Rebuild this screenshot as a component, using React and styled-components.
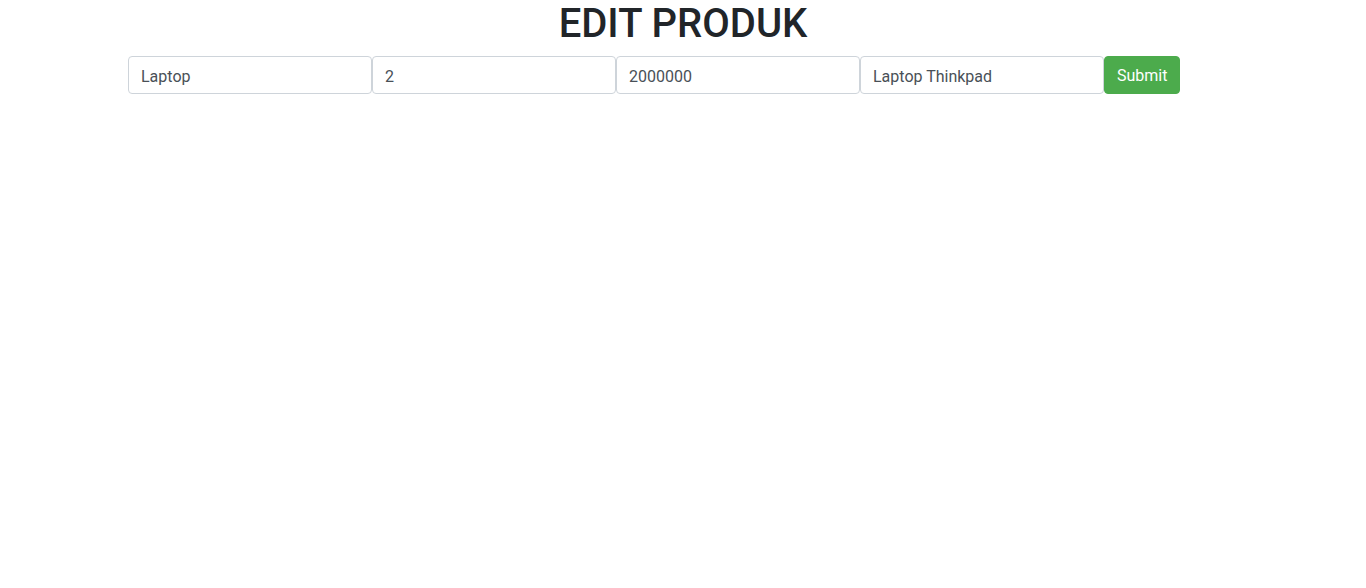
import React from "react";
import styled, { createGlobalStyle } from "styled-components";

const Global = createGlobalStyle`
  * { box-sizing: border-box; }
  body {
    margin: 0;
    background: #fff;
    font-family: Roboto, "Liberation Sans", sans-serif;
    font-size: 16px;
    line-height: 1.5;
    color: #212529;
  }
`;

const Container = styled.div`
  width: 1140px;
  margin: 0 auto;
  padding: 0 15px;
`;

const Title = styled.h1`
  margin: 0 0 8px;
  font-size: 40px;
  font-weight: 500;
  line-height: 1.2;
  text-align: center;
  color: #212529;
`;

const Form = styled.form`
  display: flex;
  align-items: center;
`;

const Input = styled.input`
  width: 244px;
  height: 38px;
  padding: 7px 12px 5px;
  font-family: inherit;
  font-size: 16px;
  line-height: 1.5;
  color: #495057;
  background: #fff;
  border: 1px solid #ced4da;
  border-radius: 4px;
  outline: none;
`;

const Button = styled.button`
  height: 38px;
  padding: 7px 12px 5px;
  font-family: inherit;
  font-size: 16px;
  line-height: 1.5;
  color: #fff;
  background: #4cab4c;
  border: 1px solid #4cab4c;
  border-radius: 4px;
  cursor: pointer;
`;

export default function App() {
  return (
    <>
      <Global />
      <Container>
        <Title>EDIT PRODUK</Title>
        <Form onSubmit={(e) => e.preventDefault()}>
          <Input defaultValue="Laptop" />
          <Input defaultValue="2" />
          <Input defaultValue="2000000" />
          <Input defaultValue="Laptop Thinkpad" />
          <Button type="submit">Submit</Button>
        </Form>
      </Container>
    </>
  );
}
